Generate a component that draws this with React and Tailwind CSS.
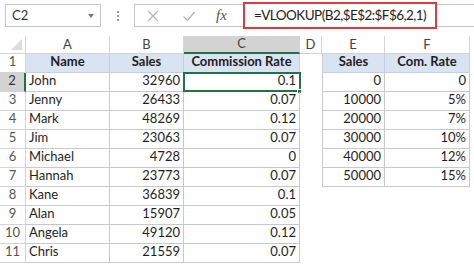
import React from "react";

const cols = [
  { key: "A", w: "w-[84px]" },
  { key: "B", w: "w-[74px]" },
  { key: "C", w: "w-[116px]" },
  { key: "D", w: "w-[22px]" },
  { key: "E", w: "w-[63px]" },
  { key: "F", w: "w-[85px]" },
];

const data = [
  ["John", "32960", "0.1"],
  ["Jenny", "26433", "0.07"],
  ["Mark", "48269", "0.12"],
  ["Jim", "23063", "0.07"],
  ["Michael", "4728", "0"],
  ["Hannah", "23773", "0.07"],
  ["Kane", "36839", "0.1"],
  ["Alan", "15907", "0.05"],
  ["Angela", "49120", "0.12"],
  ["Chris", "21559", "0.07"],
];

const lookup = [
  ["0", "0"],
  ["10000", "5%"],
  ["20000", "7%"],
  ["30000", "10%"],
  ["40000", "12%"],
  ["50000", "15%"],
];

const font = "font-['Lato','Liberation_Sans',sans-serif]";

export default function App() {
  return (
    <div className={`w-[474px] h-[264px] overflow-hidden bg-white text-[#1e1e1e] ${font}`}>
      {/* Formula bar */}
      <div className="h-[36px] flex items-start pt-[4px] pl-[5px] relative">
        <div className="w-[96px] h-[23px] border border-[#c8c8c8] flex items-center justify-between pl-[6px] pr-[6px] text-[13px] text-[#333]">
          <span>C2</span>
          <span className="w-0 h-0 border-l-[3px] border-r-[3px] border-t-[4px] border-l-transparent border-r-transparent border-t-[#777]"></span>
        </div>
        <div className="w-[33px] h-[23px] flex flex-col items-center justify-center gap-[2px]">
          <span className="w-[2px] h-[2px] bg-[#999]"></span>
          <span className="w-[2px] h-[2px] bg-[#999]"></span>
          <span className="w-[2px] h-[2px] bg-[#999]"></span>
        </div>
        <div className="flex-1 h-[23px] border border-r-0 border-[#c8c8c8] flex items-center pl-[11px] gap-[22px]">
          <svg width="14" height="14" viewBox="0 0 14 14">
            <path d="M2 2 L12 12 M12 2 L2 12" stroke="#b5b5b5" strokeWidth="1.3" fill="none" />
          </svg>
          <svg width="14" height="14" viewBox="0 0 14 14">
            <path d="M1.5 7.5 L5.5 11.5 L12.5 3" stroke="#b5b5b5" strokeWidth="1.3" fill="none" />
          </svg>
          <span className="font-['Liberation_Serif',serif] italic text-[15px] text-[#555] -ml-[2px]">fx</span>
        </div>
        <div className="absolute left-[243px] top-[2px] w-[194px] h-[27px] border-2 border-[#e0393e] bg-white flex items-center pl-[9px] text-[13.5px] text-[#222] tracking-[-0.55px] whitespace-nowrap">
          =VLOOKUP(B2,$E$2:$F$6,2,1)
        </div>
      </div>

      {/* Column headers */}
      <div className="flex h-[18px] text-[13px] text-[#444]">
        <div className="w-[26px] h-full border-r border-b border-[#d4d4d4] relative">
          <span className="absolute right-[3px] bottom-[3px] w-0 h-0" style={{ borderBottom: "11px solid #dcdcdc", borderLeft: "11px solid transparent", borderTop: "0", borderRight: "0" }}></span>
        </div>
        {cols.map((c) => (
          <div
            key={c.key}
            className={`${c.w} h-full flex items-center justify-center border-r border-[#d4d4d4] ${
              c.key === "C" ? "bg-[#d3d3d3] border-b-2 border-b-[#217346]" : "border-b border-b-[#d4d4d4]"
            }`}
          >
            {c.key}
          </div>
        ))}
      </div>

      {/* Row 1 */}
      <div className="flex h-[19px] text-[13px]">
        <div className="w-[26px] h-full flex items-end justify-center pb-[1px] text-[#555] border-r border-b border-[#d4d4d4]">1</div>
        <div className="w-[84px] h-full bg-[#dae3f2] border-r border-b border-[#c5cfdf] flex items-end justify-center pb-[1px] font-bold">Name</div>
        <div className="w-[74px] h-full bg-[#dae3f2] border-r border-b border-[#c5cfdf] flex items-end justify-center pb-[1px] font-bold">Sales</div>
        <div className="w-[116px] h-full bg-[#dae3f2] border-r border-b border-[#c5cfdf] flex items-end justify-center pb-[1px] font-bold">Commission Rate</div>
        <div className="w-[22px] h-full"></div>
        <div className="w-[63px] h-full bg-[#dae3f2] border-l border-r border-b border-[#c5cfdf] flex items-end justify-center pb-[1px] font-bold">Sales</div>
        <div className="w-[85px] h-full bg-[#dae3f2] border-r border-b border-[#c5cfdf] flex items-end justify-center pb-[1px] font-bold">Com. Rate</div>
      </div>

      {data.map((r, i) => {
        const selected = i === 0;
        const lk = lookup[i];
        return (
          <div key={i} className="flex h-[19px] text-[13px]">
            <div
              className={`w-[26px] h-full flex items-end justify-center pb-[1px] border-b border-[#d4d4d4] ${
                selected ? "bg-[#d3d3d3] border-r-2 border-r-[#217346] text-[#333]" : "border-r border-r-[#d4d4d4] text-[#555]"
              }`}
            >
              {i + 2}
            </div>
            <div className="w-[84px] h-full border-r border-b border-[#c9c9c9] flex items-end pl-[3px] pb-[1px]">{r[0]}</div>
            <div className="w-[74px] h-full border-r border-b border-[#c9c9c9] flex items-end justify-end pr-[3px] pb-[1px]">{r[1]}</div>
            <div className="w-[116px] h-full border-r border-b border-[#c9c9c9] flex items-end justify-end pr-[3px] pb-[1px] relative">
              {r[2]}
              {selected && (
                <>
                  <span className="absolute -left-[1px] -top-[1px] w-[118px] h-[20px] border-2 border-[#217346]"></span>
                  <span className="absolute -right-[3px] -bottom-[3px] w-[5px] h-[5px] bg-[#217346] border border-white"></span>
                </>
              )}
            </div>
            <div className="w-[22px] h-full"></div>
            {lk ? (
              <>
                <div className="w-[63px] h-full border-l border-r border-b border-[#c9c9c9] flex items-end justify-end pr-[3px] pb-[1px]">{lk[0]}</div>
                <div className="w-[85px] h-full border-r border-b border-[#c9c9c9] flex items-end justify-end pr-[3px] pb-[1px]">{lk[1]}</div>
              </>
            ) : null}
          </div>
        );
      })}
    </div>
  );
}
